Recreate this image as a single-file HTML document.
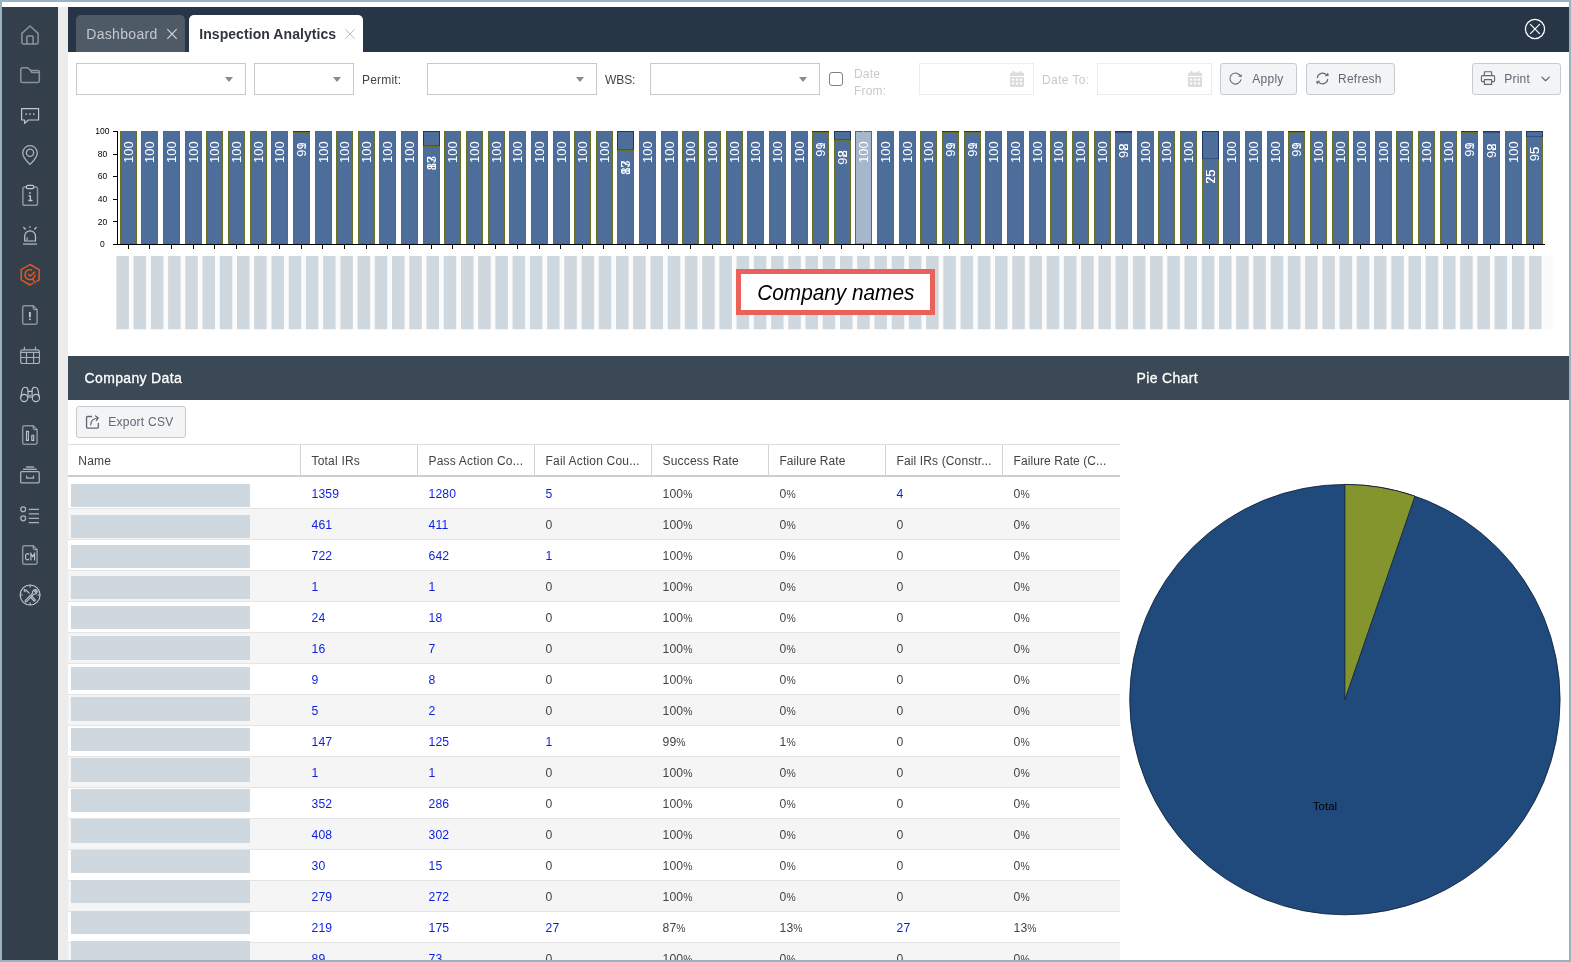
<!DOCTYPE html>
<html><head><meta charset="utf-8"><title>Inspection Analytics</title>
<style>
*{box-sizing:border-box;margin:0;padding:0}
html,body{width:1571px;height:962px;overflow:hidden}
body{background:#9bb3c1;font-family:"Liberation Sans",sans-serif;font-size:12px;color:#444;position:relative}
.abs,.abs>*{position:absolute}
#frame{left:2px;top:2px;width:1567px;height:958px;background:#fff;overflow:hidden}
#frame,#tbl,#ov{will-change:transform}
#side{left:0;top:5px;width:56px;height:953px;background:#343f4c}
#gap{left:56px;top:5px;width:10px;height:953px;background:#ececec}
#tabbar{left:66px;top:5px;width:1501px;height:45px;background:#273646}
.tab{top:8px;height:37px;border-radius:5px 5px 0 0;font-size:14px;white-space:nowrap}
#tab1{left:8px;width:109px;background:#4f5a67;color:#c3c8ce}
#tab2{left:121px;width:174px;background:#fff;color:#30353d}
.tab span{position:absolute;top:11px;line-height:16px}
.sel{top:61px;height:32px;border:1px solid #c9c9c9;background:#fff}
.sel i{position:absolute;right:11.7px;top:13px;width:0;height:0;border-left:4.8px solid transparent;border-right:4.8px solid transparent;border-top:5px solid #8b8b8b}
.lbl{white-space:nowrap;letter-spacing:0.2px;line-height:14px}
.dis{color:#c9c9c9}
.din{top:61px;height:32px;border:1px solid #ececec;background:#fff}
.btn{top:61px;height:32px;border:1px solid #c6cbd1;border-radius:3px;background:#f3f4f6;color:#5f6875}
.btn span{position:absolute;top:8px;line-height:14px;white-space:nowrap;letter-spacing:0.25px}
.btn svg{position:absolute}
.sech{top:354px;height:44px;background:#3b4855;color:#fff;font-size:14px;letter-spacing:0.34px}
.sech span{position:absolute;top:14px;line-height:16px;white-space:nowrap;-webkit-text-stroke:0.3px #fff}
.th{position:absolute;top:454px;line-height:14px;color:#3f4246;white-space:nowrap;letter-spacing:0.2px}
.vs{position:absolute;top:445px;width:1px;height:31px;background:#d4d4d4}
.tr{position:absolute;left:68px;width:1052px;height:31px;border-bottom:1px solid #e4e4e4}
.td{position:absolute;top:8.5px;line-height:14px;color:#444;white-space:nowrap;letter-spacing:0.15px;font-size:12.2px}
.lk{color:#0c1fdc}
.td b{font-weight:normal;font-size:10.4px}
.nb{position:absolute;left:71px;width:179px;height:23.4px;background:#cfd8de}
svg text{font-family:"Liberation Sans",sans-serif}
.bl{font-size:13px;fill:#fff}
.yl{font-size:8.5px;fill:#000}
</style></head><body>
<div id="frame" class="abs">
 <div id="side"></div>
 <div id="gap"></div>
 <div id="tabbar" class="abs">
  <div id="tab1" class="tab"><span style="left:10.2px;letter-spacing:0.34px">Dashboard</span>
   <svg style="position:absolute;left:90px;top:13px" width="12" height="12" viewBox="0 0 12 12"><path d="M1.3,1.2 L10.7,10.8 M10.7,1.2 L1.3,10.8" stroke="#d5d9dd" stroke-width="1.1" fill="none"/></svg></div>
  <div id="tab2" class="tab"><span style="left:10.2px;letter-spacing:0.07px;font-weight:bold">Inspection Analytics</span>
   <svg style="position:absolute;left:155px;top:13px" width="12" height="12" viewBox="0 0 12 12"><path d="M1.3,1.2 L10.7,10.8 M10.7,1.2 L1.3,10.8" stroke="#bdbdbd" stroke-width="1" fill="none"/></svg></div>
  <svg style="position:absolute;left:1455px;top:10px" width="24" height="24" viewBox="0 0 24 24"><circle cx="12" cy="12" r="9.6" fill="none" stroke="#fff" stroke-width="1.3"/><path d="M7.2,7.2 L16.8,16.8 M16.8,7.2 L7.2,16.8" stroke="#fff" stroke-width="1.2"/></svg>
 </div>

 <!-- toolbar -->
 <div class="abs" style="left:0;top:0">
  <div class="sel" style="left:74px;width:170px"><i></i></div>
  <div class="sel" style="left:252px;width:100px"><i></i></div>
  <span class="lbl" style="left:360px;top:70.5px">Permit:</span>
  <div class="sel" style="left:425px;width:170px"><i></i></div>
  <span class="lbl" style="left:603px;top:70.5px;letter-spacing:-0.1px">WBS:</span>
  <div class="sel" style="left:648px;width:170px"><i></i></div>
  <div style="left:826.5px;top:70px;width:14px;height:13.7px;border:1.4px solid #808080;border-radius:3px;background:#fff"></div>
  <span class="lbl dis" style="left:852px;top:64.3px;line-height:17px">Date<br>From:</span>
  <div class="din" style="left:917px;width:115px"></div>
  <span class="lbl dis" style="left:1040px;top:71px;letter-spacing:0.4px">Date To:</span>
  <div class="din" style="left:1095px;width:115px"></div>
  <svg class="cal" style="left:1007px;top:68px" width="16" height="18" viewBox="0 0 16 18"><path d="M1,4.2 A1.6,1.6 0 0 1 2.6,2.6 H13.4 A1.6,1.6 0 0 1 15,4.2 V6 H1 Z M1,7 H15 V15.4 A1.6,1.6 0 0 1 13.4,17 H2.6 A1.6,1.6 0 0 1 1,15.4 Z" fill="#dcdcdc"/><rect x="3.6" y="0.8" width="1.8" height="3.4" rx="0.6" fill="#dcdcdc"/><rect x="10.6" y="0.8" width="1.8" height="3.4" rx="0.6" fill="#dcdcdc"/><g fill="#fff"><rect x="3" y="8.6" width="2.2" height="2"/><rect x="6.9" y="8.6" width="2.2" height="2"/><rect x="10.8" y="8.6" width="2.2" height="2"/><rect x="3" y="12.4" width="2.2" height="2"/><rect x="6.9" y="12.4" width="2.2" height="2"/><rect x="10.8" y="12.4" width="2.2" height="2"/></g></svg>
  <svg class="cal" style="left:1185px;top:68px" width="16" height="18" viewBox="0 0 16 18"><path d="M1,4.2 A1.6,1.6 0 0 1 2.6,2.6 H13.4 A1.6,1.6 0 0 1 15,4.2 V6 H1 Z M1,7 H15 V15.4 A1.6,1.6 0 0 1 13.4,17 H2.6 A1.6,1.6 0 0 1 1,15.4 Z" fill="#dcdcdc"/><rect x="3.6" y="0.8" width="1.8" height="3.4" rx="0.6" fill="#dcdcdc"/><rect x="10.6" y="0.8" width="1.8" height="3.4" rx="0.6" fill="#dcdcdc"/><g fill="#fff"><rect x="3" y="8.6" width="2.2" height="2"/><rect x="6.9" y="8.6" width="2.2" height="2"/><rect x="10.8" y="8.6" width="2.2" height="2"/><rect x="3" y="12.4" width="2.2" height="2"/><rect x="6.9" y="12.4" width="2.2" height="2"/><rect x="10.8" y="12.4" width="2.2" height="2"/></g></svg>
  <div class="btn" style="left:1218px;width:77px"><svg style="left:7.4px;top:7.4px" width="15" height="15" viewBox="0 0 15 15"><path d="M12.86,8.9 A5.54,5.54 0 1 1 11.58,3.76" fill="none" stroke="#5f6875" stroke-width="1.1" stroke-linecap="round"/><path d="M10.6,5.05 L13.56,3.77 L13.27,5.9 Z" fill="#5f6875" stroke="#5f6875" stroke-width="0.5" stroke-linejoin="round"/></svg><span style="left:31.3px">Apply</span></div>
  <div class="btn" style="left:1304px;width:89px"><svg style="left:7.6px;top:7.2px" width="15" height="15" viewBox="0 0 15 15"><path d="M2.3,6.6 A5.3,5.3 0 0 1 11.6,4.1 M12.7,8.4 A5.3,5.3 0 0 1 3.4,10.9" fill="none" stroke="#5f6875" stroke-width="1.15" stroke-linecap="round"/><path d="M10.4,5.2 L13.7,4.6 L12.8,1.9 Z M4.6,9.8 L1.3,10.4 L2.2,13.1 Z" fill="#5f6875" stroke="#5f6875" stroke-width="0.4" stroke-linejoin="round"/></svg><span style="left:31px">Refresh</span></div>
  <div class="btn" style="left:1470px;width:89px"><svg style="left:7px;top:6.4px" width="16" height="16" viewBox="0 0 16 16"><path d="M4.4,5.6 V1.7 H11.6 V5.6 M4.4,11.6 H2.7 A1.3,1.3 0 0 1 1.4,10.3 V6.9 A1.3,1.3 0 0 1 2.7,5.6 H13.3 A1.3,1.3 0 0 1 14.6,6.9 V10.3 A1.3,1.3 0 0 1 13.3,11.6 H11.6 M4.4,9.6 H11.6 V14.4 H4.4 Z" fill="none" stroke="#5f6875" stroke-width="1.15" stroke-linejoin="round"/></svg><span style="left:31.2px">Print</span><svg style="left:66.5px;top:11px" width="12" height="10" viewBox="0 0 12 10"><path d="M1.8,2.1 L5.55,5.7 L9.3,2.1" fill="none" stroke="#5f6875" stroke-width="1.2" stroke-linecap="round" stroke-linejoin="round"/></svg></div>
 </div>

 <!-- section header -->
 <div class="sech abs" style="left:66px;width:1501px"><span style="left:16.6px">Company Data</span><span style="left:1068.5px">Pie Chart</span></div>

 <!-- export -->
 <div class="btn abs" style="left:74px;top:404px;width:110px;height:31.5px"><svg style="left:6.5px;top:6.5px" width="17" height="17" viewBox="0 0 17 17"><path d="M8.1,2.45 H3.6 A1,1 0 0 0 2.55,3.5 V13 A1,1 0 0 0 3.6,14.05 H13.3 A1,1 0 0 0 14.35,13 V9" fill="none" stroke="#5f6875" stroke-width="1.35" stroke-linecap="butt"/><path d="M6.7,10.8 C7,7 9.6,4.3 14,4 M11.6,1.9 L14.3,3.9 L12.3,6.7" fill="none" stroke="#5f6875" stroke-width="1.2" stroke-linecap="round" stroke-linejoin="round"/></svg><span style="left:31.2px;letter-spacing:0.26px">Export CSV</span></div>

 <!-- table -->
 <div style="position:absolute;left:66px;top:442px;width:1052px;height:1px;background:#dcdcdc"></div>
 <div style="position:absolute;left:66px;top:473px;width:1052px;height:2px;background:#cdcdcd"></div>
</div>
<div id="tbl" style="position:absolute;left:0;top:0;width:1569px;height:960px;overflow:hidden">
<span class="th" style="left:78.3px">Name</span>
<div class="vs" style="left:300px"></div>
<span class="th" style="left:311.5px;letter-spacing:0.2px">Total IRs</span>
<div class="vs" style="left:417px"></div>
<span class="th" style="left:428.5px;letter-spacing:0.2px">Pass Action Co...</span>
<div class="vs" style="left:534px"></div>
<span class="th" style="left:545.5px;letter-spacing:0.2px">Fail Action Cou...</span>
<div class="vs" style="left:651px"></div>
<span class="th" style="left:662.5px;letter-spacing:0.2px">Success Rate</span>
<div class="vs" style="left:768px"></div>
<span class="th" style="left:779.5px;letter-spacing:0.04px">Failure Rate</span>
<div class="vs" style="left:885px"></div>
<span class="th" style="left:896.5px;letter-spacing:0.13px">Fail IRs (Constr...</span>
<div class="vs" style="left:1002px"></div>
<span class="th" style="left:1013.5px;letter-spacing:0.08px">Failure Rate (C...</span>
<div class="tr" style="top:478px;background:#fff">
<span class="td lk" style="left:243.5px">1359</span>
<span class="td lk" style="left:360.5px">1280</span>
<span class="td lk" style="left:477.5px">5</span>
<span class="td" style="left:594.5px">100<b>%</b></span>
<span class="td" style="left:711.5px">0<b>%</b></span>
<span class="td lk" style="left:828.5px">4</span>
<span class="td" style="left:945.5px">0<b>%</b></span>
</div>
<div class="tr" style="top:509px;background:#f5f5f5">
<span class="td lk" style="left:243.5px">461</span>
<span class="td lk" style="left:360.5px">411</span>
<span class="td" style="left:477.5px">0</span>
<span class="td" style="left:594.5px">100<b>%</b></span>
<span class="td" style="left:711.5px">0<b>%</b></span>
<span class="td" style="left:828.5px">0</span>
<span class="td" style="left:945.5px">0<b>%</b></span>
</div>
<div class="tr" style="top:540px;background:#fff">
<span class="td lk" style="left:243.5px">722</span>
<span class="td lk" style="left:360.5px">642</span>
<span class="td lk" style="left:477.5px">1</span>
<span class="td" style="left:594.5px">100<b>%</b></span>
<span class="td" style="left:711.5px">0<b>%</b></span>
<span class="td" style="left:828.5px">0</span>
<span class="td" style="left:945.5px">0<b>%</b></span>
</div>
<div class="tr" style="top:571px;background:#f5f5f5">
<span class="td lk" style="left:243.5px">1</span>
<span class="td lk" style="left:360.5px">1</span>
<span class="td" style="left:477.5px">0</span>
<span class="td" style="left:594.5px">100<b>%</b></span>
<span class="td" style="left:711.5px">0<b>%</b></span>
<span class="td" style="left:828.5px">0</span>
<span class="td" style="left:945.5px">0<b>%</b></span>
</div>
<div class="tr" style="top:602px;background:#fff">
<span class="td lk" style="left:243.5px">24</span>
<span class="td lk" style="left:360.5px">18</span>
<span class="td" style="left:477.5px">0</span>
<span class="td" style="left:594.5px">100<b>%</b></span>
<span class="td" style="left:711.5px">0<b>%</b></span>
<span class="td" style="left:828.5px">0</span>
<span class="td" style="left:945.5px">0<b>%</b></span>
</div>
<div class="tr" style="top:633px;background:#f5f5f5">
<span class="td lk" style="left:243.5px">16</span>
<span class="td lk" style="left:360.5px">7</span>
<span class="td" style="left:477.5px">0</span>
<span class="td" style="left:594.5px">100<b>%</b></span>
<span class="td" style="left:711.5px">0<b>%</b></span>
<span class="td" style="left:828.5px">0</span>
<span class="td" style="left:945.5px">0<b>%</b></span>
</div>
<div class="tr" style="top:664px;background:#fff">
<span class="td lk" style="left:243.5px">9</span>
<span class="td lk" style="left:360.5px">8</span>
<span class="td" style="left:477.5px">0</span>
<span class="td" style="left:594.5px">100<b>%</b></span>
<span class="td" style="left:711.5px">0<b>%</b></span>
<span class="td" style="left:828.5px">0</span>
<span class="td" style="left:945.5px">0<b>%</b></span>
</div>
<div class="tr" style="top:695px;background:#f5f5f5">
<span class="td lk" style="left:243.5px">5</span>
<span class="td lk" style="left:360.5px">2</span>
<span class="td" style="left:477.5px">0</span>
<span class="td" style="left:594.5px">100<b>%</b></span>
<span class="td" style="left:711.5px">0<b>%</b></span>
<span class="td" style="left:828.5px">0</span>
<span class="td" style="left:945.5px">0<b>%</b></span>
</div>
<div class="tr" style="top:726px;background:#fff">
<span class="td lk" style="left:243.5px">147</span>
<span class="td lk" style="left:360.5px">125</span>
<span class="td lk" style="left:477.5px">1</span>
<span class="td" style="left:594.5px">99<b>%</b></span>
<span class="td" style="left:711.5px">1<b>%</b></span>
<span class="td" style="left:828.5px">0</span>
<span class="td" style="left:945.5px">0<b>%</b></span>
</div>
<div class="tr" style="top:757px;background:#f5f5f5">
<span class="td lk" style="left:243.5px">1</span>
<span class="td lk" style="left:360.5px">1</span>
<span class="td" style="left:477.5px">0</span>
<span class="td" style="left:594.5px">100<b>%</b></span>
<span class="td" style="left:711.5px">0<b>%</b></span>
<span class="td" style="left:828.5px">0</span>
<span class="td" style="left:945.5px">0<b>%</b></span>
</div>
<div class="tr" style="top:788px;background:#fff">
<span class="td lk" style="left:243.5px">352</span>
<span class="td lk" style="left:360.5px">286</span>
<span class="td" style="left:477.5px">0</span>
<span class="td" style="left:594.5px">100<b>%</b></span>
<span class="td" style="left:711.5px">0<b>%</b></span>
<span class="td" style="left:828.5px">0</span>
<span class="td" style="left:945.5px">0<b>%</b></span>
</div>
<div class="tr" style="top:819px;background:#f5f5f5">
<span class="td lk" style="left:243.5px">408</span>
<span class="td lk" style="left:360.5px">302</span>
<span class="td" style="left:477.5px">0</span>
<span class="td" style="left:594.5px">100<b>%</b></span>
<span class="td" style="left:711.5px">0<b>%</b></span>
<span class="td" style="left:828.5px">0</span>
<span class="td" style="left:945.5px">0<b>%</b></span>
</div>
<div class="tr" style="top:850px;background:#fff">
<span class="td lk" style="left:243.5px">30</span>
<span class="td lk" style="left:360.5px">15</span>
<span class="td" style="left:477.5px">0</span>
<span class="td" style="left:594.5px">100<b>%</b></span>
<span class="td" style="left:711.5px">0<b>%</b></span>
<span class="td" style="left:828.5px">0</span>
<span class="td" style="left:945.5px">0<b>%</b></span>
</div>
<div class="tr" style="top:881px;background:#f5f5f5">
<span class="td lk" style="left:243.5px">279</span>
<span class="td lk" style="left:360.5px">272</span>
<span class="td" style="left:477.5px">0</span>
<span class="td" style="left:594.5px">100<b>%</b></span>
<span class="td" style="left:711.5px">0<b>%</b></span>
<span class="td" style="left:828.5px">0</span>
<span class="td" style="left:945.5px">0<b>%</b></span>
</div>
<div class="tr" style="top:912px;background:#fff">
<span class="td lk" style="left:243.5px">219</span>
<span class="td lk" style="left:360.5px">175</span>
<span class="td lk" style="left:477.5px">27</span>
<span class="td" style="left:594.5px">87<b>%</b></span>
<span class="td" style="left:711.5px">13<b>%</b></span>
<span class="td lk" style="left:828.5px">27</span>
<span class="td" style="left:945.5px">13<b>%</b></span>
</div>
<div class="tr" style="top:943px;background:#f5f5f5">
<span class="td lk" style="left:243.5px">89</span>
<span class="td lk" style="left:360.5px">73</span>
<span class="td" style="left:477.5px">0</span>
<span class="td" style="left:594.5px">100<b>%</b></span>
<span class="td" style="left:711.5px">0<b>%</b></span>
<span class="td" style="left:828.5px">0</span>
<span class="td" style="left:945.5px">0<b>%</b></span>
</div>
<div class="nb" style="top:484.1px"></div>
<div class="nb" style="top:514.6px"></div>
<div class="nb" style="top:545.0px"></div>
<div class="nb" style="top:575.5px"></div>
<div class="nb" style="top:605.9px"></div>
<div class="nb" style="top:636.4px"></div>
<div class="nb" style="top:666.9px"></div>
<div class="nb" style="top:697.3px"></div>
<div class="nb" style="top:727.8px"></div>
<div class="nb" style="top:758.2px"></div>
<div class="nb" style="top:788.7px"></div>
<div class="nb" style="top:819.2px"></div>
<div class="nb" style="top:849.6px"></div>
<div class="nb" style="top:880.1px"></div>
<div class="nb" style="top:910.5px"></div>
<div class="nb" style="top:941.0px"></div>
</div>
<svg id="ov" style="position:absolute;left:0;top:0" width="1571" height="962" viewBox="0 0 1571 962">
<g shape-rendering="crispEdges">
<rect x="113" y="131" width="5" height="1" fill="#000"/>
<text class="yl" x="102.4" y="134.2" text-anchor="middle">100</text>
<rect x="113" y="154" width="5" height="1" fill="#000"/>
<text class="yl" x="102.4" y="156.8" text-anchor="middle">80</text>
<rect x="113" y="176" width="5" height="1" fill="#000"/>
<text class="yl" x="102.4" y="179.4" text-anchor="middle">60</text>
<rect x="113" y="199" width="5" height="1" fill="#000"/>
<text class="yl" x="102.4" y="202.0" text-anchor="middle">40</text>
<rect x="113" y="221" width="5" height="1" fill="#000"/>
<text class="yl" x="102.4" y="224.6" text-anchor="middle">20</text>
<rect x="113" y="244" width="5" height="1" fill="#000"/>
<text class="yl" x="102.4" y="247.2" text-anchor="middle">0</text>
<rect x="117" y="131" width="1" height="114" fill="#000"/>
</g>
<rect x="120.5" y="131.5" width="16" height="112.5" fill="#4d6d9b" stroke="#67711f"/>
<rect x="127.8" y="131" width="1.4" height="1" fill="#4d6d9b"/>
<rect x="128" y="244" width="1" height="5" fill="#000" shape-rendering="crispEdges"/>
<text class="bl" transform="translate(133.1,141.2) rotate(-90)" text-anchor="end">100</text>
<rect x="141.5" y="131.5" width="16" height="112.5" fill="#4d6d9b" stroke="#67711f"/>
<rect x="148.8" y="131" width="1.4" height="1" fill="#4d6d9b"/>
<rect x="149" y="244" width="1" height="5" fill="#000" shape-rendering="crispEdges"/>
<text class="bl" transform="translate(154.1,141.2) rotate(-90)" text-anchor="end">100</text>
<rect x="163.5" y="131.5" width="16" height="112.5" fill="#4d6d9b" stroke="#67711f"/>
<rect x="170.8" y="131" width="1.4" height="1" fill="#4d6d9b"/>
<rect x="171" y="244" width="1" height="5" fill="#000" shape-rendering="crispEdges"/>
<text class="bl" transform="translate(176.1,141.2) rotate(-90)" text-anchor="end">100</text>
<rect x="185.5" y="131.5" width="16" height="112.5" fill="#4d6d9b" stroke="#67711f"/>
<rect x="192.8" y="131" width="1.4" height="1" fill="#4d6d9b"/>
<rect x="193" y="244" width="1" height="5" fill="#000" shape-rendering="crispEdges"/>
<text class="bl" transform="translate(198.1,141.2) rotate(-90)" text-anchor="end">100</text>
<rect x="206.5" y="131.5" width="16" height="112.5" fill="#4d6d9b" stroke="#67711f"/>
<rect x="213.8" y="131" width="1.4" height="1" fill="#4d6d9b"/>
<rect x="214" y="244" width="1" height="5" fill="#000" shape-rendering="crispEdges"/>
<text class="bl" transform="translate(219.1,141.2) rotate(-90)" text-anchor="end">100</text>
<rect x="228.5" y="131.5" width="16" height="112.5" fill="#4d6d9b" stroke="#67711f"/>
<rect x="235.8" y="131" width="1.4" height="1" fill="#4d6d9b"/>
<rect x="236" y="244" width="1" height="5" fill="#000" shape-rendering="crispEdges"/>
<text class="bl" transform="translate(241.1,141.2) rotate(-90)" text-anchor="end">100</text>
<rect x="250.5" y="131.5" width="16" height="112.5" fill="#4d6d9b" stroke="#67711f"/>
<rect x="257.8" y="131" width="1.4" height="1" fill="#4d6d9b"/>
<rect x="258" y="244" width="1" height="5" fill="#000" shape-rendering="crispEdges"/>
<text class="bl" transform="translate(263.1,141.2) rotate(-90)" text-anchor="end">100</text>
<rect x="271.5" y="131.5" width="16" height="112.5" fill="#4d6d9b" stroke="#67711f"/>
<rect x="278.8" y="131" width="1.4" height="1" fill="#4d6d9b"/>
<rect x="279" y="244" width="1" height="5" fill="#000" shape-rendering="crispEdges"/>
<text class="bl" transform="translate(284.1,141.2) rotate(-90)" text-anchor="end">100</text>
<rect x="293.5" y="132.5" width="16" height="111.5" fill="#4d6d9b" stroke="#67711f"/>
<rect x="293.5" y="131.5" width="16" height="0.5" fill="#4d6d9b" stroke="#1d3868"/>
<line x1="293" y1="132.5" x2="310" y2="132.5" stroke="#67711f"/>
<rect x="300.8" y="132" width="1.4" height="1" fill="#4d6d9b"/>
<rect x="301" y="244" width="1" height="5" fill="#000" shape-rendering="crispEdges"/>
<text class="bl" transform="translate(306.1,142.3) rotate(-90)" text-anchor="end">99</text>
<text class="bl" fill-opacity="0.65" transform="translate(306.1,142.3) rotate(-90)" text-anchor="end">1</text>
<rect x="315.5" y="131.5" width="16" height="112.5" fill="#4d6d9b" stroke="#67711f"/>
<rect x="322.8" y="131" width="1.4" height="1" fill="#4d6d9b"/>
<rect x="322" y="244" width="1" height="5" fill="#000" shape-rendering="crispEdges"/>
<text class="bl" transform="translate(328.1,141.2) rotate(-90)" text-anchor="end">100</text>
<rect x="336.5" y="131.5" width="16" height="112.5" fill="#4d6d9b" stroke="#67711f"/>
<rect x="343.8" y="131" width="1.4" height="1" fill="#4d6d9b"/>
<rect x="344" y="244" width="1" height="5" fill="#000" shape-rendering="crispEdges"/>
<text class="bl" transform="translate(349.1,141.2) rotate(-90)" text-anchor="end">100</text>
<rect x="358.5" y="131.5" width="16" height="112.5" fill="#4d6d9b" stroke="#67711f"/>
<rect x="365.8" y="131" width="1.4" height="1" fill="#4d6d9b"/>
<rect x="366" y="244" width="1" height="5" fill="#000" shape-rendering="crispEdges"/>
<text class="bl" transform="translate(371.1,141.2) rotate(-90)" text-anchor="end">100</text>
<rect x="379.5" y="131.5" width="16" height="112.5" fill="#4d6d9b" stroke="#67711f"/>
<rect x="386.8" y="131" width="1.4" height="1" fill="#4d6d9b"/>
<rect x="387" y="244" width="1" height="5" fill="#000" shape-rendering="crispEdges"/>
<text class="bl" transform="translate(392.1,141.2) rotate(-90)" text-anchor="end">100</text>
<rect x="401.5" y="131.5" width="16" height="112.5" fill="#4d6d9b" stroke="#67711f"/>
<rect x="408.8" y="131" width="1.4" height="1" fill="#4d6d9b"/>
<rect x="409" y="244" width="1" height="5" fill="#000" shape-rendering="crispEdges"/>
<text class="bl" transform="translate(414.1,141.2) rotate(-90)" text-anchor="end">100</text>
<rect x="423.5" y="146.5" width="16" height="97.5" fill="#4d6d9b" stroke="#67711f"/>
<rect x="423.5" y="131.5" width="16" height="14.5" fill="#4d6d9b" stroke="#1d3868"/>
<line x1="423" y1="146.5" x2="440" y2="146.5" stroke="#67711f"/>
<rect x="430.8" y="146" width="1.4" height="1" fill="#4d6d9b"/>
<rect x="431" y="244" width="1" height="5" fill="#000" shape-rendering="crispEdges"/>
<text class="bl" transform="translate(436.1,155.9) rotate(-90)" text-anchor="end">87</text>
<text class="bl" transform="translate(436.1,155.9) rotate(-90)" text-anchor="end">13</text>
<rect x="444.5" y="131.5" width="16" height="112.5" fill="#4d6d9b" stroke="#67711f"/>
<rect x="451.8" y="131" width="1.4" height="1" fill="#4d6d9b"/>
<rect x="452" y="244" width="1" height="5" fill="#000" shape-rendering="crispEdges"/>
<text class="bl" transform="translate(457.1,141.2) rotate(-90)" text-anchor="end">100</text>
<rect x="466.5" y="131.5" width="16" height="112.5" fill="#4d6d9b" stroke="#67711f"/>
<rect x="473.8" y="131" width="1.4" height="1" fill="#4d6d9b"/>
<rect x="474" y="244" width="1" height="5" fill="#000" shape-rendering="crispEdges"/>
<text class="bl" transform="translate(479.1,141.2) rotate(-90)" text-anchor="end">100</text>
<rect x="488.5" y="131.5" width="16" height="112.5" fill="#4d6d9b" stroke="#67711f"/>
<rect x="495.8" y="131" width="1.4" height="1" fill="#4d6d9b"/>
<rect x="495" y="244" width="1" height="5" fill="#000" shape-rendering="crispEdges"/>
<text class="bl" transform="translate(501.1,141.2) rotate(-90)" text-anchor="end">100</text>
<rect x="509.5" y="131.5" width="16" height="112.5" fill="#4d6d9b" stroke="#67711f"/>
<rect x="516.8" y="131" width="1.4" height="1" fill="#4d6d9b"/>
<rect x="517" y="244" width="1" height="5" fill="#000" shape-rendering="crispEdges"/>
<text class="bl" transform="translate(522.1,141.2) rotate(-90)" text-anchor="end">100</text>
<rect x="531.5" y="131.5" width="16" height="112.5" fill="#4d6d9b" stroke="#67711f"/>
<rect x="538.8" y="131" width="1.4" height="1" fill="#4d6d9b"/>
<rect x="539" y="244" width="1" height="5" fill="#000" shape-rendering="crispEdges"/>
<text class="bl" transform="translate(544.1,141.2) rotate(-90)" text-anchor="end">100</text>
<rect x="553.5" y="131.5" width="16" height="112.5" fill="#4d6d9b" stroke="#67711f"/>
<rect x="560.8" y="131" width="1.4" height="1" fill="#4d6d9b"/>
<rect x="560" y="244" width="1" height="5" fill="#000" shape-rendering="crispEdges"/>
<text class="bl" transform="translate(566.1,141.2) rotate(-90)" text-anchor="end">100</text>
<rect x="574.5" y="131.5" width="16" height="112.5" fill="#4d6d9b" stroke="#67711f"/>
<rect x="581.8" y="131" width="1.4" height="1" fill="#4d6d9b"/>
<rect x="582" y="244" width="1" height="5" fill="#000" shape-rendering="crispEdges"/>
<text class="bl" transform="translate(587.1,141.2) rotate(-90)" text-anchor="end">100</text>
<rect x="596.5" y="131.5" width="16" height="112.5" fill="#4d6d9b" stroke="#67711f"/>
<rect x="603.8" y="131" width="1.4" height="1" fill="#4d6d9b"/>
<rect x="603" y="244" width="1" height="5" fill="#000" shape-rendering="crispEdges"/>
<text class="bl" transform="translate(609.1,141.2) rotate(-90)" text-anchor="end">100</text>
<rect x="617.5" y="150.5" width="16" height="93.5" fill="#4d6d9b" stroke="#67711f"/>
<rect x="617.5" y="131.5" width="16" height="18.5" fill="#4d6d9b" stroke="#1d3868"/>
<line x1="617" y1="150.5" x2="634" y2="150.5" stroke="#67711f"/>
<rect x="624.8" y="150" width="1.4" height="1" fill="#4d6d9b"/>
<rect x="625" y="244" width="1" height="5" fill="#000" shape-rendering="crispEdges"/>
<text class="bl" transform="translate(630.1,160.4) rotate(-90)" text-anchor="end">83</text>
<text class="bl" transform="translate(630.1,160.4) rotate(-90)" text-anchor="end">17</text>
<rect x="639.5" y="131.5" width="16" height="112.5" fill="#4d6d9b" stroke="#67711f"/>
<rect x="646.8" y="131" width="1.4" height="1" fill="#4d6d9b"/>
<rect x="647" y="244" width="1" height="5" fill="#000" shape-rendering="crispEdges"/>
<text class="bl" transform="translate(652.1,141.2) rotate(-90)" text-anchor="end">100</text>
<rect x="661.5" y="131.5" width="16" height="112.5" fill="#4d6d9b" stroke="#67711f"/>
<rect x="668.8" y="131" width="1.4" height="1" fill="#4d6d9b"/>
<rect x="668" y="244" width="1" height="5" fill="#000" shape-rendering="crispEdges"/>
<text class="bl" transform="translate(674.1,141.2) rotate(-90)" text-anchor="end">100</text>
<rect x="682.5" y="131.5" width="16" height="112.5" fill="#4d6d9b" stroke="#67711f"/>
<rect x="689.8" y="131" width="1.4" height="1" fill="#4d6d9b"/>
<rect x="690" y="244" width="1" height="5" fill="#000" shape-rendering="crispEdges"/>
<text class="bl" transform="translate(695.1,141.2) rotate(-90)" text-anchor="end">100</text>
<rect x="704.5" y="131.5" width="16" height="112.5" fill="#4d6d9b" stroke="#67711f"/>
<rect x="711.8" y="131" width="1.4" height="1" fill="#4d6d9b"/>
<rect x="712" y="244" width="1" height="5" fill="#000" shape-rendering="crispEdges"/>
<text class="bl" transform="translate(717.1,141.2) rotate(-90)" text-anchor="end">100</text>
<rect x="726.5" y="131.5" width="16" height="112.5" fill="#4d6d9b" stroke="#67711f"/>
<rect x="733.8" y="131" width="1.4" height="1" fill="#4d6d9b"/>
<rect x="733" y="244" width="1" height="5" fill="#000" shape-rendering="crispEdges"/>
<text class="bl" transform="translate(739.1,141.2) rotate(-90)" text-anchor="end">100</text>
<rect x="747.5" y="131.5" width="16" height="112.5" fill="#4d6d9b" stroke="#67711f"/>
<rect x="754.8" y="131" width="1.4" height="1" fill="#4d6d9b"/>
<rect x="755" y="244" width="1" height="5" fill="#000" shape-rendering="crispEdges"/>
<text class="bl" transform="translate(760.1,141.2) rotate(-90)" text-anchor="end">100</text>
<rect x="769.5" y="131.5" width="16" height="112.5" fill="#4d6d9b" stroke="#67711f"/>
<rect x="776.8" y="131" width="1.4" height="1" fill="#4d6d9b"/>
<rect x="776" y="244" width="1" height="5" fill="#000" shape-rendering="crispEdges"/>
<text class="bl" transform="translate(782.1,141.2) rotate(-90)" text-anchor="end">100</text>
<rect x="791.5" y="131.5" width="16" height="112.5" fill="#4d6d9b" stroke="#67711f"/>
<rect x="798.8" y="131" width="1.4" height="1" fill="#4d6d9b"/>
<rect x="798" y="244" width="1" height="5" fill="#000" shape-rendering="crispEdges"/>
<text class="bl" transform="translate(804.1,141.2) rotate(-90)" text-anchor="end">100</text>
<rect x="812.5" y="132.5" width="16" height="111.5" fill="#4d6d9b" stroke="#67711f"/>
<rect x="812.5" y="131.5" width="16" height="0.5" fill="#4d6d9b" stroke="#1d3868"/>
<line x1="812" y1="132.5" x2="829" y2="132.5" stroke="#67711f"/>
<rect x="819.8" y="132" width="1.4" height="1" fill="#4d6d9b"/>
<rect x="820" y="244" width="1" height="5" fill="#000" shape-rendering="crispEdges"/>
<text class="bl" transform="translate(825.1,142.3) rotate(-90)" text-anchor="end">99</text>
<text class="bl" fill-opacity="0.65" transform="translate(825.1,142.3) rotate(-90)" text-anchor="end">1</text>
<rect x="834.5" y="140.5" width="16" height="103.5" fill="#4d6d9b" stroke="#67711f"/>
<rect x="834.5" y="131.5" width="16" height="8.5" fill="#4d6d9b" stroke="#1d3868"/>
<line x1="834" y1="140.5" x2="851" y2="140.5" stroke="#67711f"/>
<rect x="841.8" y="140" width="1.4" height="1" fill="#4d6d9b"/>
<rect x="841" y="244" width="1" height="5" fill="#000" shape-rendering="crispEdges"/>
<text class="bl" transform="translate(847.1,150.2) rotate(-90)" text-anchor="end">92</text>
<text class="bl" transform="translate(847.1,150.2) rotate(-90)" text-anchor="end">8</text>
<rect x="855.5" y="131.5" width="16" height="112.5" fill="#a6b6cb" stroke="#67711f"/>
<rect x="862.8" y="131" width="1.4" height="1" fill="#a6b6cb"/>
<rect x="863" y="244" width="1" height="5" fill="#000" shape-rendering="crispEdges"/>
<text class="bl" transform="translate(868.1,141.2) rotate(-90)" text-anchor="end">100</text>
<rect x="877.5" y="131.5" width="16" height="112.5" fill="#4d6d9b" stroke="#67711f"/>
<rect x="884.8" y="131" width="1.4" height="1" fill="#4d6d9b"/>
<rect x="885" y="244" width="1" height="5" fill="#000" shape-rendering="crispEdges"/>
<text class="bl" transform="translate(890.1,141.2) rotate(-90)" text-anchor="end">100</text>
<rect x="899.5" y="131.5" width="16" height="112.5" fill="#4d6d9b" stroke="#67711f"/>
<rect x="906.8" y="131" width="1.4" height="1" fill="#4d6d9b"/>
<rect x="906" y="244" width="1" height="5" fill="#000" shape-rendering="crispEdges"/>
<text class="bl" transform="translate(912.1,141.2) rotate(-90)" text-anchor="end">100</text>
<rect x="920.5" y="131.5" width="16" height="112.5" fill="#4d6d9b" stroke="#67711f"/>
<rect x="927.8" y="131" width="1.4" height="1" fill="#4d6d9b"/>
<rect x="928" y="244" width="1" height="5" fill="#000" shape-rendering="crispEdges"/>
<text class="bl" transform="translate(933.1,141.2) rotate(-90)" text-anchor="end">100</text>
<rect x="942.5" y="132.5" width="16" height="111.5" fill="#4d6d9b" stroke="#67711f"/>
<rect x="942.5" y="131.5" width="16" height="0.5" fill="#4d6d9b" stroke="#1d3868"/>
<line x1="942" y1="132.5" x2="959" y2="132.5" stroke="#67711f"/>
<rect x="949.8" y="132" width="1.4" height="1" fill="#4d6d9b"/>
<rect x="949" y="244" width="1" height="5" fill="#000" shape-rendering="crispEdges"/>
<text class="bl" transform="translate(955.1,142.3) rotate(-90)" text-anchor="end">99</text>
<text class="bl" fill-opacity="0.65" transform="translate(955.1,142.3) rotate(-90)" text-anchor="end">1</text>
<rect x="964.5" y="132.5" width="16" height="111.5" fill="#4d6d9b" stroke="#67711f"/>
<rect x="964.5" y="131.5" width="16" height="0.5" fill="#4d6d9b" stroke="#1d3868"/>
<line x1="964" y1="132.5" x2="981" y2="132.5" stroke="#67711f"/>
<rect x="971.8" y="132" width="1.4" height="1" fill="#4d6d9b"/>
<rect x="971" y="244" width="1" height="5" fill="#000" shape-rendering="crispEdges"/>
<text class="bl" transform="translate(977.1,142.3) rotate(-90)" text-anchor="end">99</text>
<text class="bl" fill-opacity="0.65" transform="translate(977.1,142.3) rotate(-90)" text-anchor="end">1</text>
<rect x="985.5" y="131.5" width="16" height="112.5" fill="#4d6d9b" stroke="#67711f"/>
<rect x="992.8" y="131" width="1.4" height="1" fill="#4d6d9b"/>
<rect x="993" y="244" width="1" height="5" fill="#000" shape-rendering="crispEdges"/>
<text class="bl" transform="translate(998.1,141.2) rotate(-90)" text-anchor="end">100</text>
<rect x="1007.5" y="131.5" width="16" height="112.5" fill="#4d6d9b" stroke="#67711f"/>
<rect x="1014.8" y="131" width="1.4" height="1" fill="#4d6d9b"/>
<rect x="1014" y="244" width="1" height="5" fill="#000" shape-rendering="crispEdges"/>
<text class="bl" transform="translate(1020.1,141.2) rotate(-90)" text-anchor="end">100</text>
<rect x="1029.5" y="131.5" width="16" height="112.5" fill="#4d6d9b" stroke="#67711f"/>
<rect x="1036.8" y="131" width="1.4" height="1" fill="#4d6d9b"/>
<rect x="1036" y="244" width="1" height="5" fill="#000" shape-rendering="crispEdges"/>
<text class="bl" transform="translate(1042.1,141.2) rotate(-90)" text-anchor="end">100</text>
<rect x="1050.5" y="131.5" width="16" height="112.5" fill="#4d6d9b" stroke="#67711f"/>
<rect x="1057.8" y="131" width="1.4" height="1" fill="#4d6d9b"/>
<rect x="1058" y="244" width="1" height="5" fill="#000" shape-rendering="crispEdges"/>
<text class="bl" transform="translate(1063.1,141.2) rotate(-90)" text-anchor="end">100</text>
<rect x="1072.5" y="131.5" width="16" height="112.5" fill="#4d6d9b" stroke="#67711f"/>
<rect x="1079.8" y="131" width="1.4" height="1" fill="#4d6d9b"/>
<rect x="1079" y="244" width="1" height="5" fill="#000" shape-rendering="crispEdges"/>
<text class="bl" transform="translate(1085.1,141.2) rotate(-90)" text-anchor="end">100</text>
<rect x="1094.5" y="131.5" width="16" height="112.5" fill="#4d6d9b" stroke="#67711f"/>
<rect x="1101.8" y="131" width="1.4" height="1" fill="#4d6d9b"/>
<rect x="1101" y="244" width="1" height="5" fill="#000" shape-rendering="crispEdges"/>
<text class="bl" transform="translate(1107.1,141.2) rotate(-90)" text-anchor="end">100</text>
<rect x="1115.5" y="133.5" width="16" height="110.5" fill="#4d6d9b" stroke="#67711f"/>
<rect x="1115.5" y="131.5" width="16" height="1.5" fill="#4d6d9b" stroke="#1d3868"/>
<line x1="1115" y1="133.5" x2="1132" y2="133.5" stroke="#67711f"/>
<rect x="1122.8" y="133" width="1.4" height="1" fill="#4d6d9b"/>
<rect x="1122" y="244" width="1" height="5" fill="#000" shape-rendering="crispEdges"/>
<text class="bl" transform="translate(1128.1,143.5) rotate(-90)" text-anchor="end">98</text>
<text class="bl" transform="translate(1128.1,143.5) rotate(-90)" text-anchor="end">2</text>
<rect x="1137.5" y="131.5" width="16" height="112.5" fill="#4d6d9b" stroke="#67711f"/>
<rect x="1144.8" y="131" width="1.4" height="1" fill="#4d6d9b"/>
<rect x="1144" y="244" width="1" height="5" fill="#000" shape-rendering="crispEdges"/>
<text class="bl" transform="translate(1150.1,141.2) rotate(-90)" text-anchor="end">100</text>
<rect x="1158.5" y="131.5" width="16" height="112.5" fill="#4d6d9b" stroke="#67711f"/>
<rect x="1165.8" y="131" width="1.4" height="1" fill="#4d6d9b"/>
<rect x="1166" y="244" width="1" height="5" fill="#000" shape-rendering="crispEdges"/>
<text class="bl" transform="translate(1171.1,141.2) rotate(-90)" text-anchor="end">100</text>
<rect x="1180.5" y="131.5" width="16" height="112.5" fill="#4d6d9b" stroke="#67711f"/>
<rect x="1187.8" y="131" width="1.4" height="1" fill="#4d6d9b"/>
<rect x="1187" y="244" width="1" height="5" fill="#000" shape-rendering="crispEdges"/>
<text class="bl" transform="translate(1193.1,141.2) rotate(-90)" text-anchor="end">100</text>
<rect x="1202.5" y="159.5" width="16" height="84.5" fill="#4d6d9b" stroke="#67711f"/>
<rect x="1202.5" y="131.5" width="16" height="27.5" fill="#4d6d9b" stroke="#1d3868"/>
<line x1="1202" y1="159.5" x2="1219" y2="159.5" stroke="#67711f"/>
<rect x="1209.8" y="159" width="1.4" height="1" fill="#4d6d9b"/>
<rect x="1209" y="244" width="1" height="5" fill="#000" shape-rendering="crispEdges"/>
<text class="bl" transform="translate(1215.1,169.4) rotate(-90)" text-anchor="end">75</text>
<text class="bl" transform="translate(1215.1,169.4) rotate(-90)" text-anchor="end">25</text>
<rect x="1223.5" y="131.5" width="16" height="112.5" fill="#4d6d9b" stroke="#67711f"/>
<rect x="1230.8" y="131" width="1.4" height="1" fill="#4d6d9b"/>
<rect x="1230" y="244" width="1" height="5" fill="#000" shape-rendering="crispEdges"/>
<text class="bl" transform="translate(1236.1,141.2) rotate(-90)" text-anchor="end">100</text>
<rect x="1245.5" y="131.5" width="16" height="112.5" fill="#4d6d9b" stroke="#67711f"/>
<rect x="1252.8" y="131" width="1.4" height="1" fill="#4d6d9b"/>
<rect x="1252" y="244" width="1" height="5" fill="#000" shape-rendering="crispEdges"/>
<text class="bl" transform="translate(1258.1,141.2) rotate(-90)" text-anchor="end">100</text>
<rect x="1267.5" y="131.5" width="16" height="112.5" fill="#4d6d9b" stroke="#67711f"/>
<rect x="1274.8" y="131" width="1.4" height="1" fill="#4d6d9b"/>
<rect x="1274" y="244" width="1" height="5" fill="#000" shape-rendering="crispEdges"/>
<text class="bl" transform="translate(1280.1,141.2) rotate(-90)" text-anchor="end">100</text>
<rect x="1288.5" y="132.5" width="16" height="111.5" fill="#4d6d9b" stroke="#67711f"/>
<rect x="1288.5" y="131.5" width="16" height="0.5" fill="#4d6d9b" stroke="#1d3868"/>
<line x1="1288" y1="132.5" x2="1305" y2="132.5" stroke="#67711f"/>
<rect x="1295.8" y="132" width="1.4" height="1" fill="#4d6d9b"/>
<rect x="1295" y="244" width="1" height="5" fill="#000" shape-rendering="crispEdges"/>
<text class="bl" transform="translate(1301.1,142.3) rotate(-90)" text-anchor="end">99</text>
<text class="bl" fill-opacity="0.65" transform="translate(1301.1,142.3) rotate(-90)" text-anchor="end">1</text>
<rect x="1310.5" y="131.5" width="16" height="112.5" fill="#4d6d9b" stroke="#67711f"/>
<rect x="1317.8" y="131" width="1.4" height="1" fill="#4d6d9b"/>
<rect x="1317" y="244" width="1" height="5" fill="#000" shape-rendering="crispEdges"/>
<text class="bl" transform="translate(1323.1,141.2) rotate(-90)" text-anchor="end">100</text>
<rect x="1332.5" y="131.5" width="16" height="112.5" fill="#4d6d9b" stroke="#67711f"/>
<rect x="1339.8" y="131" width="1.4" height="1" fill="#4d6d9b"/>
<rect x="1339" y="244" width="1" height="5" fill="#000" shape-rendering="crispEdges"/>
<text class="bl" transform="translate(1345.1,141.2) rotate(-90)" text-anchor="end">100</text>
<rect x="1353.5" y="131.5" width="16" height="112.5" fill="#4d6d9b" stroke="#67711f"/>
<rect x="1360.8" y="131" width="1.4" height="1" fill="#4d6d9b"/>
<rect x="1360" y="244" width="1" height="5" fill="#000" shape-rendering="crispEdges"/>
<text class="bl" transform="translate(1366.1,141.2) rotate(-90)" text-anchor="end">100</text>
<rect x="1375.5" y="131.5" width="16" height="112.5" fill="#4d6d9b" stroke="#67711f"/>
<rect x="1382.8" y="131" width="1.4" height="1" fill="#4d6d9b"/>
<rect x="1382" y="244" width="1" height="5" fill="#000" shape-rendering="crispEdges"/>
<text class="bl" transform="translate(1388.1,141.2) rotate(-90)" text-anchor="end">100</text>
<rect x="1396.5" y="131.5" width="16" height="112.5" fill="#4d6d9b" stroke="#67711f"/>
<rect x="1403.8" y="131" width="1.4" height="1" fill="#4d6d9b"/>
<rect x="1403" y="244" width="1" height="5" fill="#000" shape-rendering="crispEdges"/>
<text class="bl" transform="translate(1409.1,141.2) rotate(-90)" text-anchor="end">100</text>
<rect x="1418.5" y="131.5" width="16" height="112.5" fill="#4d6d9b" stroke="#67711f"/>
<rect x="1425.8" y="131" width="1.4" height="1" fill="#4d6d9b"/>
<rect x="1425" y="244" width="1" height="5" fill="#000" shape-rendering="crispEdges"/>
<text class="bl" transform="translate(1431.1,141.2) rotate(-90)" text-anchor="end">100</text>
<rect x="1440.5" y="131.5" width="16" height="112.5" fill="#4d6d9b" stroke="#67711f"/>
<rect x="1447.8" y="131" width="1.4" height="1" fill="#4d6d9b"/>
<rect x="1447" y="244" width="1" height="5" fill="#000" shape-rendering="crispEdges"/>
<text class="bl" transform="translate(1453.1,141.2) rotate(-90)" text-anchor="end">100</text>
<rect x="1461.5" y="132.5" width="16" height="111.5" fill="#4d6d9b" stroke="#67711f"/>
<rect x="1461.5" y="131.5" width="16" height="0.5" fill="#4d6d9b" stroke="#1d3868"/>
<line x1="1461" y1="132.5" x2="1478" y2="132.5" stroke="#67711f"/>
<rect x="1468.8" y="132" width="1.4" height="1" fill="#4d6d9b"/>
<rect x="1468" y="244" width="1" height="5" fill="#000" shape-rendering="crispEdges"/>
<text class="bl" transform="translate(1474.1,142.3) rotate(-90)" text-anchor="end">99</text>
<text class="bl" fill-opacity="0.65" transform="translate(1474.1,142.3) rotate(-90)" text-anchor="end">1</text>
<rect x="1483.5" y="133.5" width="16" height="110.5" fill="#4d6d9b" stroke="#67711f"/>
<rect x="1483.5" y="131.5" width="16" height="1.5" fill="#4d6d9b" stroke="#1d3868"/>
<line x1="1483" y1="133.5" x2="1500" y2="133.5" stroke="#67711f"/>
<rect x="1490.8" y="133" width="1.4" height="1" fill="#4d6d9b"/>
<rect x="1490" y="244" width="1" height="5" fill="#000" shape-rendering="crispEdges"/>
<text class="bl" transform="translate(1496.1,143.5) rotate(-90)" text-anchor="end">98</text>
<text class="bl" transform="translate(1496.1,143.5) rotate(-90)" text-anchor="end">2</text>
<rect x="1505.5" y="131.5" width="16" height="112.5" fill="#4d6d9b" stroke="#67711f"/>
<rect x="1512.8" y="131" width="1.4" height="1" fill="#4d6d9b"/>
<rect x="1512" y="244" width="1" height="5" fill="#000" shape-rendering="crispEdges"/>
<text class="bl" transform="translate(1518.1,141.2) rotate(-90)" text-anchor="end">100</text>
<rect x="1526.5" y="137.5" width="16" height="106.5" fill="#4d6d9b" stroke="#67711f"/>
<rect x="1526.5" y="131.5" width="16" height="5.5" fill="#4d6d9b" stroke="#1d3868"/>
<line x1="1526" y1="137.5" x2="1543" y2="137.5" stroke="#67711f"/>
<rect x="1533.8" y="137" width="1.4" height="1" fill="#4d6d9b"/>
<rect x="1533" y="244" width="1" height="5" fill="#000" shape-rendering="crispEdges"/>
<text class="bl" transform="translate(1539.1,146.8) rotate(-90)" text-anchor="end">95</text>
<text class="bl" transform="translate(1539.1,146.8) rotate(-90)" text-anchor="end">5</text>
<rect x="113" y="244" width="1432" height="1" fill="#000" shape-rendering="crispEdges"/>
<rect x="116" y="256" width="1437" height="73.3" fill="#fbfbfb"/>
<rect x="116.4" y="256" width="12.5" height="73.3" fill="#cfd8de"/>
<rect x="133.6" y="256" width="12.5" height="73.3" fill="#cfd8de"/>
<rect x="150.9" y="256" width="12.5" height="73.3" fill="#cfd8de"/>
<rect x="168.1" y="256" width="12.5" height="73.3" fill="#cfd8de"/>
<rect x="185.3" y="256" width="12.5" height="73.3" fill="#cfd8de"/>
<rect x="202.5" y="256" width="12.5" height="73.3" fill="#cfd8de"/>
<rect x="219.8" y="256" width="12.5" height="73.3" fill="#cfd8de"/>
<rect x="237.0" y="256" width="12.5" height="73.3" fill="#cfd8de"/>
<rect x="254.2" y="256" width="12.5" height="73.3" fill="#cfd8de"/>
<rect x="271.5" y="256" width="12.5" height="73.3" fill="#cfd8de"/>
<rect x="288.7" y="256" width="12.5" height="73.3" fill="#cfd8de"/>
<rect x="305.9" y="256" width="12.5" height="73.3" fill="#cfd8de"/>
<rect x="323.1" y="256" width="12.5" height="73.3" fill="#cfd8de"/>
<rect x="340.4" y="256" width="12.5" height="73.3" fill="#cfd8de"/>
<rect x="357.6" y="256" width="12.5" height="73.3" fill="#cfd8de"/>
<rect x="374.8" y="256" width="12.5" height="73.3" fill="#cfd8de"/>
<rect x="392.0" y="256" width="12.5" height="73.3" fill="#cfd8de"/>
<rect x="409.3" y="256" width="12.5" height="73.3" fill="#cfd8de"/>
<rect x="426.5" y="256" width="12.5" height="73.3" fill="#cfd8de"/>
<rect x="443.7" y="256" width="12.5" height="73.3" fill="#cfd8de"/>
<rect x="461.0" y="256" width="12.5" height="73.3" fill="#cfd8de"/>
<rect x="478.2" y="256" width="12.5" height="73.3" fill="#cfd8de"/>
<rect x="495.4" y="256" width="12.5" height="73.3" fill="#cfd8de"/>
<rect x="512.6" y="256" width="12.5" height="73.3" fill="#cfd8de"/>
<rect x="529.9" y="256" width="12.5" height="73.3" fill="#cfd8de"/>
<rect x="547.1" y="256" width="12.5" height="73.3" fill="#cfd8de"/>
<rect x="564.3" y="256" width="12.5" height="73.3" fill="#cfd8de"/>
<rect x="581.6" y="256" width="12.5" height="73.3" fill="#cfd8de"/>
<rect x="598.8" y="256" width="12.5" height="73.3" fill="#cfd8de"/>
<rect x="616.0" y="256" width="12.5" height="73.3" fill="#cfd8de"/>
<rect x="633.2" y="256" width="12.5" height="73.3" fill="#cfd8de"/>
<rect x="650.5" y="256" width="12.5" height="73.3" fill="#cfd8de"/>
<rect x="667.7" y="256" width="12.5" height="73.3" fill="#cfd8de"/>
<rect x="684.9" y="256" width="12.5" height="73.3" fill="#cfd8de"/>
<rect x="702.2" y="256" width="12.5" height="73.3" fill="#cfd8de"/>
<rect x="719.4" y="256" width="12.5" height="73.3" fill="#cfd8de"/>
<rect x="736.6" y="256" width="12.5" height="73.3" fill="#cfd8de"/>
<rect x="753.8" y="256" width="12.5" height="73.3" fill="#cfd8de"/>
<rect x="771.1" y="256" width="12.5" height="73.3" fill="#cfd8de"/>
<rect x="788.3" y="256" width="12.5" height="73.3" fill="#cfd8de"/>
<rect x="805.5" y="256" width="12.5" height="73.3" fill="#cfd8de"/>
<rect x="822.7" y="256" width="12.5" height="73.3" fill="#cfd8de"/>
<rect x="840.0" y="256" width="12.5" height="73.3" fill="#cfd8de"/>
<rect x="857.2" y="256" width="12.5" height="73.3" fill="#cfd8de"/>
<rect x="874.4" y="256" width="12.5" height="73.3" fill="#cfd8de"/>
<rect x="891.7" y="256" width="12.5" height="73.3" fill="#cfd8de"/>
<rect x="908.9" y="256" width="12.5" height="73.3" fill="#cfd8de"/>
<rect x="926.1" y="256" width="12.5" height="73.3" fill="#cfd8de"/>
<rect x="943.3" y="256" width="12.5" height="73.3" fill="#cfd8de"/>
<rect x="960.6" y="256" width="12.5" height="73.3" fill="#cfd8de"/>
<rect x="977.8" y="256" width="12.5" height="73.3" fill="#cfd8de"/>
<rect x="995.0" y="256" width="12.5" height="73.3" fill="#cfd8de"/>
<rect x="1012.3" y="256" width="12.5" height="73.3" fill="#cfd8de"/>
<rect x="1029.5" y="256" width="12.5" height="73.3" fill="#cfd8de"/>
<rect x="1046.7" y="256" width="12.5" height="73.3" fill="#cfd8de"/>
<rect x="1063.9" y="256" width="12.5" height="73.3" fill="#cfd8de"/>
<rect x="1081.2" y="256" width="12.5" height="73.3" fill="#cfd8de"/>
<rect x="1098.4" y="256" width="12.5" height="73.3" fill="#cfd8de"/>
<rect x="1115.6" y="256" width="12.5" height="73.3" fill="#cfd8de"/>
<rect x="1132.9" y="256" width="12.5" height="73.3" fill="#cfd8de"/>
<rect x="1150.1" y="256" width="12.5" height="73.3" fill="#cfd8de"/>
<rect x="1167.3" y="256" width="12.5" height="73.3" fill="#cfd8de"/>
<rect x="1184.5" y="256" width="12.5" height="73.3" fill="#cfd8de"/>
<rect x="1201.8" y="256" width="12.5" height="73.3" fill="#cfd8de"/>
<rect x="1219.0" y="256" width="12.5" height="73.3" fill="#cfd8de"/>
<rect x="1236.2" y="256" width="12.5" height="73.3" fill="#cfd8de"/>
<rect x="1253.4" y="256" width="12.5" height="73.3" fill="#cfd8de"/>
<rect x="1270.7" y="256" width="12.5" height="73.3" fill="#cfd8de"/>
<rect x="1287.9" y="256" width="12.5" height="73.3" fill="#cfd8de"/>
<rect x="1305.1" y="256" width="12.5" height="73.3" fill="#cfd8de"/>
<rect x="1322.4" y="256" width="12.5" height="73.3" fill="#cfd8de"/>
<rect x="1339.6" y="256" width="12.5" height="73.3" fill="#cfd8de"/>
<rect x="1356.8" y="256" width="12.5" height="73.3" fill="#cfd8de"/>
<rect x="1374.0" y="256" width="12.5" height="73.3" fill="#cfd8de"/>
<rect x="1391.3" y="256" width="12.5" height="73.3" fill="#cfd8de"/>
<rect x="1408.5" y="256" width="12.5" height="73.3" fill="#cfd8de"/>
<rect x="1425.7" y="256" width="12.5" height="73.3" fill="#cfd8de"/>
<rect x="1443.0" y="256" width="12.5" height="73.3" fill="#cfd8de"/>
<rect x="1460.2" y="256" width="12.5" height="73.3" fill="#cfd8de"/>
<rect x="1477.4" y="256" width="12.5" height="73.3" fill="#cfd8de"/>
<rect x="1494.6" y="256" width="12.5" height="73.3" fill="#cfd8de"/>
<rect x="1511.9" y="256" width="12.5" height="73.3" fill="#cfd8de"/>
<rect x="1529.1" y="256" width="12.5" height="73.3" fill="#cfd8de"/>
<rect x="738.5" y="271.5" width="194" height="41" fill="#fff" stroke="#e96157" stroke-width="5"/>
<text transform="translate(835.8,299.7) scale(1,1.068)" text-anchor="middle" font-size="20.8" font-style="italic" fill="#000">Company names</text>
<circle cx="1344.9" cy="699.6" r="215.2" fill="#204a7c" stroke="#0c1c33" stroke-width="0.8"/>
<path d="M1344.9,699.6 L1344.9,484.40000000000003 A215.2,215.2 0 0 1 1414.96,496.12 Z" fill="#84952e" stroke="#0c1c33" stroke-width="0.8" stroke-linejoin="round"/>
<text x="1325" y="809.8" text-anchor="middle" font-size="11.5" fill="#000">Total</text>
<g transform="translate(0,35)" fill="none" stroke="#8b929c" stroke-width="1.5" stroke-linecap="round" stroke-linejoin="round"><path d="M21.9,-1.6 L30,-9 L38.1,-1.6 V7.6 A1.4,1.4 0 0 1 36.7,9 H23.3 A1.4,1.4 0 0 1 21.9,7.6 Z"/><path d="M26.9,9 V2.2 A1.2,1.2 0 0 1 28.1,1 H31.9 A1.2,1.2 0 0 1 33.1,2.2 V9"/></g><g transform="translate(0,75)" fill="none" stroke="#8b929c" stroke-width="1.5" stroke-linecap="round" stroke-linejoin="round"><path d="M22.3,-7.2 H27.6 L30.6,-4.6 H37.8 A1.5,1.5 0 0 1 39.3,-3.1 V5.9 A1.5,1.5 0 0 1 37.8,7.4 H22.3 A1.5,1.5 0 0 1 20.8,5.9 V-5.7 A1.5,1.5 0 0 1 22.3,-7.2 Z"/><path d="M30.6,-4.6 L31.6,-2.6 H39"/></g><g transform="translate(0,115)" fill="none" stroke="#c2c6cc" stroke-width="1.2" stroke-linecap="round" stroke-linejoin="round"><path d="M21.6,-6.4 H38.6 V5 H28.4 L24.6,8.4 V5 H21.6 Z"/><path d="M25.6,-0.9 h1.2 M29.4,-0.9 h1.2 M33.2,-0.9 h1.2" stroke-width="1.6" stroke-linecap="butt"/></g><g transform="translate(0,155)" fill="none" stroke="#abb1b8" stroke-width="1.3" stroke-linecap="round" stroke-linejoin="round"><path d="M30,9.4 C26.4,5.8 22.7,2.6 22.7,-2 A7.3,7.3 0 0 1 37.3,-2 C37.3,2.6 33.6,5.8 30,9.4 Z"/><circle cx="30" cy="-2.2" r="3.6"/></g><g transform="translate(0,195)" fill="none" stroke="#8b929c" stroke-width="1.5" stroke-linecap="round" stroke-linejoin="round"><rect x="22.9" y="-8" width="14.6" height="18.2" rx="1.8"/><rect x="26.4" y="-9.6" width="7.4" height="3.2" rx="1.4" fill="#343f4c" stroke="#c2c6cc" stroke-width="1.2"/><g stroke="#c2c6cc"><path d="M29.9,-2.7 v1.5" stroke-width="1.7" stroke-linecap="butt"/><path d="M28.6,0.9 H30.4 V5.4 M28.4,5.5 H32.5" stroke-width="1.3" stroke-linecap="butt"/></g></g><g transform="translate(0,235)" fill="none" stroke="#c2c6cc" stroke-width="1.2" stroke-linecap="round" stroke-linejoin="round"><path d="M24.7,6 V1.2 A5.4,5.4 0 0 1 35.5,1.2 V6 Z"/><path d="M23,9.1 H37" stroke="#8b929c" stroke-width="1.9" stroke-linecap="butt"/><path d="M29.9,-9 v1.7" stroke="#8b929c" stroke-width="1.8" stroke-linecap="butt"/><path d="M23.7,-7.6 l1.5,1.6 M36.3,-7.6 l-1.5,1.6" stroke-width="1.3"/><path d="M27.2,5.6 V2.4" stroke="#8b929c" stroke-width="1.7" stroke-linecap="butt"/></g><g transform="translate(0,275)" fill="none" stroke="#e8571f" stroke-width="1.45" stroke-linecap="round" stroke-linejoin="round"><path d="M32.6,8.4 L30,10 L21.2,4.9 V-5.3 L30,-10.5 L39.1,-5.3 V4.9 L36.6,6.4"/><path d="M31.7,-5.05 A5,5 0 1 0 34.97,0.2"/><path d="M28.6,-0.4 L30.3,1 L34.8,-3"/><path d="M32.9,4.3 L35,7.8"/></g><g transform="translate(0,315)" fill="none" stroke="#8b929c" stroke-width="1.5" stroke-linecap="round" stroke-linejoin="round"><path d="M24.3,-9.2 H33.2 L37.1,-5.3 V7.7 A1.6,1.6 0 0 1 35.5,9.3 H24.3 A1.6,1.6 0 0 1 22.7,7.7 V-7.6 A1.6,1.6 0 0 1 24.3,-9.2 Z"/><path d="M33.2,-9 V-6.4 A1.1,1.1 0 0 0 34.3,-5.3 H36.9" stroke="#aab0b7" stroke-width="1"/><g stroke="#c2c6cc"><path d="M29.9,-3 V2.4" stroke-width="1.9" stroke-linecap="butt"/><path d="M29.9,3.6 v1.5" stroke-width="1.9" stroke-linecap="butt"/></g></g><g transform="translate(0,355)" fill="none" stroke="#abb1b8" stroke-width="1.15" stroke-linecap="round" stroke-linejoin="round"><rect x="20.7" y="-5.2" width="18.7" height="13.7" rx="2"/><path d="M24.4,-8 V-5.4 M35.5,-8 V-5.4 M21,-2.7 H39.2 M21,2.5 H39.2 M26.5,-2.7 V8.4 M33.6,-2.7 V8.4"/></g><g transform="translate(0,395)" fill="none" stroke="#c2c6cc" stroke-width="1.1" stroke-linecap="round" stroke-linejoin="round"><circle cx="24.2" cy="3" r="3.6"/><circle cx="35.9" cy="3" r="3.6"/><path d="M20.9,1.6 L22.3,-5.6 A2.9,2.9 0 0 1 28,-5 V1.8 M39.2,1.6 L37.8,-5.6 A2.9,2.9 0 0 0 32.1,-5 V1.8"/><path d="M28,-3.6 H32 M28,2 H32"/><rect x="28.6" y="-0.4" width="3" height="2.2" fill="#8b929c" stroke="none"/></g><g transform="translate(0,435)" fill="none" stroke="#8b929c" stroke-width="1.5" stroke-linecap="round" stroke-linejoin="round"><path d="M24.3,-9.2 H33.2 L37.1,-5.3 V7.7 A1.6,1.6 0 0 1 35.5,9.3 H24.3 A1.6,1.6 0 0 1 22.7,7.7 V-7.6 A1.6,1.6 0 0 1 24.3,-9.2 Z"/><path d="M33.2,-9 V-6.4 A1.1,1.1 0 0 0 34.3,-5.3 H36.9" stroke="#aab0b7" stroke-width="1"/><g stroke="#c2c6cc"><rect x="26.5" y="-3.6" width="1.9" height="9" stroke-width="1.1"/><rect x="31.8" y="0.2" width="1.9" height="5.2" stroke-width="1.1"/></g></g><g transform="translate(0,475)" fill="none" stroke="#abb1b8" stroke-width="1.25" stroke-linecap="round" stroke-linejoin="round"><rect x="20.7" y="-3.5" width="18.5" height="11.4" rx="1"/><path d="M23,-5.7 H36.8" stroke-linecap="butt" stroke-width="1.4"/><path d="M26.1,-8 H34.1" stroke="#8b929c" stroke-width="1.9" stroke-linecap="butt"/><path d="M26.7,1 V3 H33.5 V1"/></g><g transform="translate(0,515)" fill="none" stroke="#abb1b8" stroke-width="1.25" stroke-linecap="round" stroke-linejoin="round"><circle cx="23.2" cy="-5.8" r="2.45"/><circle cx="23.2" cy="3.3" r="2.45"/><path d="M28.8,-5.6 H39 M28.8,-1.2 H39 M28.8,3.3 H39 M28.8,7.6 H39" stroke-linecap="butt"/></g><g transform="translate(0,555)" fill="none" stroke="#8b929c" stroke-width="1.5" stroke-linecap="round" stroke-linejoin="round"><path d="M24.3,-9.2 H33.2 L37.1,-5.3 V7.7 A1.6,1.6 0 0 1 35.5,9.3 H24.3 A1.6,1.6 0 0 1 22.7,7.7 V-7.6 A1.6,1.6 0 0 1 24.3,-9.2 Z"/><path d="M33.2,-9 V-6.4 A1.1,1.1 0 0 0 34.3,-5.3 H36.9" stroke="#aab0b7" stroke-width="1"/><g stroke="#c2c6cc"><path d="M28.7,-0.6 A1.7,1.7 0 0 0 25.6,0.3 V3.2 A1.7,1.7 0 0 0 28.7,4.1 M30.9,5 V-1.4 L32.75,1.6 L34.6,-1.4 V5" stroke-width="1.15" stroke-linejoin="miter"/></g></g><g transform="translate(0,595)" fill="none" stroke="#c2c6cc" stroke-width="1.1" stroke-linecap="round" stroke-linejoin="round"><circle cx="30.1" cy="0" r="9.95"/><path d="M30.1,-9.8 v1.9 M30.1,7.9 v1.9 M20.3,0 h1.9 M38,0 h1.9"/><path d="M25.4,5.4 L32.6,-1.8 A2.9,2.9 0 0 1 36.2,-5.4 L34.4,-3.6 L35.4,-2.6 L37.2,-4.4 A2.9,2.9 0 0 1 33.8,-0.8 L26.6,6.6 A0.85,0.85 0 0 1 25.4,5.4 Z"/><path d="M24.4,-5.6 L26,-5 L29.2,-1.8 M31.6,1 L35.2,4.8 A0.9,0.9 0 0 1 34,6 L30.4,2.2 M24.4,-5.6 L24,-4.6 L25.2,-3.4"/></g>
<rect x="0" y="960" width="1571" height="2" fill="#9bb3c1"/>
<rect x="1569" y="0" width="2" height="962" fill="#9bb3c1"/>
</svg>
</body></html>
